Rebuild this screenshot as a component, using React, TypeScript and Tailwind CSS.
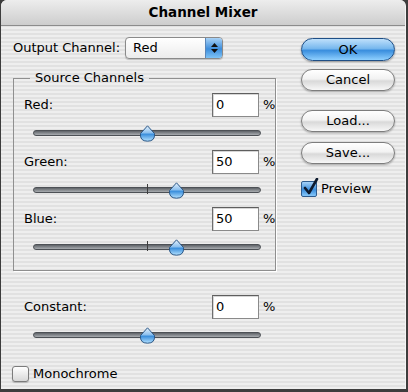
import React from "react";

function Thumb() {
  return (
    <svg width="17" height="17" viewBox="0 0 17 17">
      <defs>
        <linearGradient id="thumbg" x1="0" y1="0" x2="0" y2="1">
          <stop offset="0" stopColor="#e8f3fd" />
          <stop offset="0.45" stopColor="#8cc0ee" />
          <stop offset="0.55" stopColor="#3b8fdc" />
          <stop offset="1" stopColor="#b5e2ff" />
        </linearGradient>
      </defs>
      <path
        d="M8.5 0.8 L15.5 8.6 Q16.3 16.2 8.5 16.2 Q0.7 16.2 1.5 8.6 Z"
        fill="url(#thumbg)"
        stroke="#2c5887"
        strokeWidth="1"
      />
    </svg>
  );
}

function Slider({ value, tick }: { value: number; tick?: boolean }) {
  const left = (228 * (value + 200)) / 400;
  return (
    <div className="relative ml-[9px] h-[33px] w-[228px]">
      <div className="absolute left-0 right-0 top-[13px] h-[6px] rounded-full border border-[#4d5156] bg-[linear-gradient(#5f6368,#a9adb1)]" />
      {tick && <div className="absolute left-[114px] top-[10px] h-[10px] w-px bg-[#3e3e3e]" />}
      <div className="absolute top-[8px]" style={{ left: left - 8 }}>
        <Thumb />
      </div>
    </div>
  );
}

function Field({ value }: { value: string }) {
  return (
    <div className="flex h-[24px] w-[47px] items-center border border-[#8a8a8a] border-t-[#5e5e5e] border-l-[#6e6e6e] bg-white pl-[3px] shadow-[inset_1px_1px_0_#d6d6d6]">
      {value}
    </div>
  );
}

function Row({ label, value }: { label: string; value: string }) {
  return (
    <div className="flex h-[24px] items-center">
      <div className="w-[188px]">{label}</div>
      <Field value={value} />
      <div className="ml-[4px]">%</div>
    </div>
  );
}

function AquaButton({ label, primary }: { label: string; primary?: boolean }) {
  return (
    <div
      className={
        primary
          ? "flex h-[23px] w-[94px] items-center justify-center rounded-full border border-[#1f4f86] bg-[linear-gradient(#bfe0fb_0%,#78b8ee_45%,#3a8ede_55%,#8fd0ff_100%)] shadow-[0_1px_2px_rgba(0,0,0,0.35)]"
          : "flex h-[22px] w-[94px] items-center justify-center rounded-full border border-[#7d7d7d] bg-[linear-gradient(#ffffff_0%,#f2f2f2_45%,#d9d9d9_55%,#f7f7f7_100%)] shadow-[0_1px_2px_rgba(0,0,0,0.3)]"
      }
    >
      {label}
    </div>
  );
}

export default function App() {
  return (
    <div className="h-[392px] w-[408px] bg-[#3d3d3d] font-['DejaVu_Sans',sans-serif] text-[13px] text-black">
      <div className="ml-[1px] h-[389px] w-[405px] overflow-hidden rounded-t-[6px] border-r border-r-[#f4f4f4] bg-[repeating-linear-gradient(0deg,#eeeeee_0px,#eeeeee_2px,#e1e1e1_2px,#e1e1e1_4px)]">
        <div className="flex h-[26px] items-center justify-center border-b border-[#8c8c8c] bg-[linear-gradient(#ededed,#cdcdcd)] text-[13.5px] font-bold">
          Channel Mixer
        </div>
        <div className="flex">
          <div className="w-[300px]">
            <div className="ml-[12px] mt-[11px] flex h-[22px] items-center">
              <div className="w-[112px]">Output Channel:</div>
              <div className="flex h-[22px] w-[98px] overflow-hidden rounded-[4px] border border-[#8a8a8a] bg-[linear-gradient(#ffffff,#ececec)] shadow-[0_1px_1px_rgba(0,0,0,0.2)]">
                <div className="flex flex-1 items-center pl-[7px]">Red</div>
                <div className="flex w-[17px] flex-col items-center justify-center gap-[2px] border-l border-[#5a86b8] bg-[linear-gradient(#a8d2f7,#3d8ddb_55%,#7ec3f6)]">
                  <svg width="7" height="4" viewBox="0 0 7 4"><path d="M3.5 0 L7 4 L0 4 Z" fill="#111" /></svg>
                  <svg width="7" height="4" viewBox="0 0 7 4"><path d="M0 0 L7 0 L3.5 4 Z" fill="#111" /></svg>
                </div>
              </div>
            </div>
            <fieldset className="ml-[12px] mt-[11px] w-[259px] border border-[#8f8f8f] pb-[6px] pl-[10px] pt-[7px] shadow-[1px_1px_0_#ffffff]">
              <legend className="ml-[6px] h-[16px] px-[5px] leading-[16px]">Source Channels</legend>
              <Row label="Red:" value="0" />
              <Slider value={0} />
              <Row label="Green:" value="50" />
              <Slider value={50} tick />
              <Row label="Blue:" value="50" />
              <Slider value={50} tick />
            </fieldset>
            <div className="ml-[23px] mt-[24px]">
              <Row label="Constant:" value="0" />
              <Slider value={0} />
            </div>
            <div className="ml-[11px] mt-[12px] flex items-center">
              <div className="h-[16px] w-[17px] rounded-[3px] border border-[#7c7c7c] bg-[linear-gradient(#ffffff,#d8d8d8)] shadow-[0_1px_1px_rgba(0,0,0,0.2)]" />
              <div className="ml-[4px]">Monochrome</div>
            </div>
          </div>
          <div className="mt-[12px] flex w-[94px] flex-col">
            <AquaButton label="OK" primary />
            <div className="mt-[8px]">
              <AquaButton label="Cancel" />
            </div>
            <div className="mt-[19px]">
              <AquaButton label="Load..." />
            </div>
            <div className="mt-[10px]">
              <AquaButton label="Save..." />
            </div>
            <div className="mt-[15px] flex items-center">
              <div className="relative h-[16px] w-[16px] rounded-[2px] border border-[#2d5b8e] bg-[linear-gradient(#a6d2f8,#3b8ddc_55%,#86c8fa)]">
                <svg className="absolute left-[1px] top-[-4px]" width="16" height="18" viewBox="0 0 16 18">
                  <path d="M2 10 L6 15 L14 1" fill="none" stroke="#0d1a2e" strokeWidth="2.6" strokeLinecap="round" strokeLinejoin="round" />
                </svg>
              </div>
              <div className="ml-[4px]">Preview</div>
            </div>
          </div>
        </div>
      </div>
    </div>
  );
}
